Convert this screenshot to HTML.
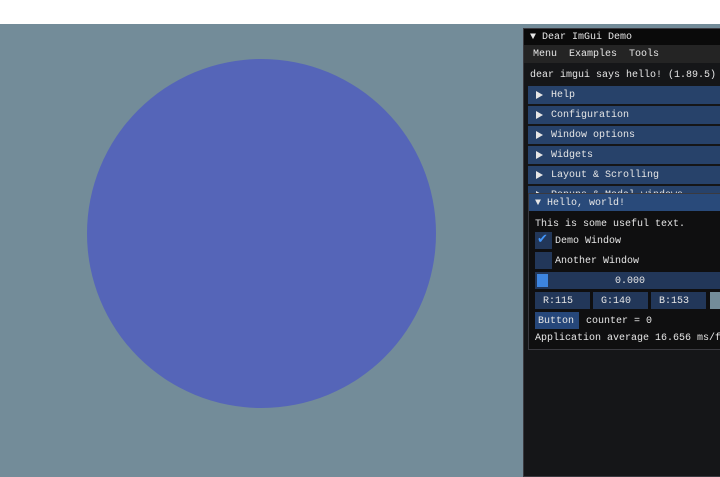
<!DOCTYPE html>
<html><head><style>
*{margin:0;padding:0;box-sizing:border-box}
body{width:720px;height:477px;overflow:hidden;background:#fff;position:relative;font-family:"Liberation Mono",monospace;font-size:10px;color:#e6e6e6}
.bg{position:absolute;left:0;top:24px;width:720px;height:453px;background:#738c99}
.circle{position:absolute;left:87px;top:59px;width:349px;height:349px;border-radius:50%;background:#5565b8}
.demo{position:absolute;left:523px;top:28px;width:200px;height:449px;background:#151618;border:1px solid #3a3a40;overflow:hidden}
.abs{position:absolute;white-space:pre;line-height:12px}
.hdr{position:absolute;left:4px;width:200px;height:18px;background:#27426a}
.hdr span{position:absolute;left:23px;top:4px;line-height:12px;white-space:pre}
.tri{position:absolute;left:8px;top:5px;width:0;height:0;border-left:7px solid #e6e6e6;border-top:4px solid transparent;border-bottom:4px solid transparent}
.hello{position:absolute;left:528px;top:193px;width:200px;height:157px;background:#0f0f10;border:1px solid #3a3a40;overflow:hidden}
.box{position:absolute;background:#223759}
</style></head><body>
<div class="bg"></div>
<div class="circle"></div>
<div class="demo">
 <div style="position:absolute;left:0;top:0;width:200px;height:16px;background:#0a0a0a"></div>
 <div class="abs" style="left:6px;top:3px">▼ Dear ImGui Demo</div>
 <div style="position:absolute;left:0;top:16px;width:200px;height:18px;background:#242424"></div>
 <div class="abs" style="left:9px;top:20px">Menu  Examples  Tools</div>
 <div class="abs" style="left:6px;top:41px">dear imgui says hello! (1.89.5)</div>
 <div class="hdr" style="top:57px"><div class="tri"></div><span>Help</span></div>
 <div class="hdr" style="top:77px"><div class="tri"></div><span>Configuration</span></div>
 <div class="hdr" style="top:97px"><div class="tri"></div><span>Window options</span></div>
 <div class="hdr" style="top:117px"><div class="tri"></div><span>Widgets</span></div>
 <div class="hdr" style="top:137px"><div class="tri"></div><span>Layout &amp; Scrolling</span></div>
 <div class="hdr" style="top:157px"><div class="tri"></div><span>Popups &amp; Modal windows</span></div>
</div>
<div class="hello">
 <div style="position:absolute;left:0;top:0;width:200px;height:17px;background:#294a7a"></div>
 <div class="abs" style="left:6px;top:4px">▼ Hello, world!</div>
 <div class="abs" style="left:6px;top:25px">This is some useful text.</div>
 <div class="box" style="left:6px;top:38px;width:17px;height:17px"></div>
 <div class="abs" style="left:8px;top:40px;color:#4296fa;font-size:13px;font-family:'DejaVu Sans',sans-serif">✔</div>
 <div class="abs" style="left:26px;top:42px">Demo Window</div>
 <div class="box" style="left:6px;top:58px;width:17px;height:17px"></div>
 <div class="abs" style="left:26px;top:62px">Another Window</div>
 <div class="box" style="left:6px;top:78px;width:200px;height:17px"></div>
 <div style="position:absolute;left:8px;top:80px;width:11px;height:13px;background:#3d85e0"></div>
 <div class="abs" style="left:86px;top:82px">0.000</div>
 <div class="box" style="left:6px;top:98px;width:55px;height:17px"></div>
 <div class="abs" style="left:14px;top:102px">R:115</div>
 <div class="box" style="left:64px;top:98px;width:55px;height:17px"></div>
 <div class="abs" style="left:72px;top:102px">G:140</div>
 <div class="box" style="left:122px;top:98px;width:55px;height:17px"></div>
 <div class="abs" style="left:130px;top:102px">B:153</div>
 <div style="position:absolute;left:181px;top:98px;width:20px;height:17px;background:#738c99"></div>
 <div style="position:absolute;left:6px;top:118px;width:44px;height:17px;background:#26477a"></div>
 <div class="abs" style="left:9px;top:122px">Button</div>
 <div class="abs" style="left:57px;top:122px">counter = 0</div>
 <div class="abs" style="left:6px;top:139px">Application average 16.656 ms/f</div>
</div>
</body></html>
